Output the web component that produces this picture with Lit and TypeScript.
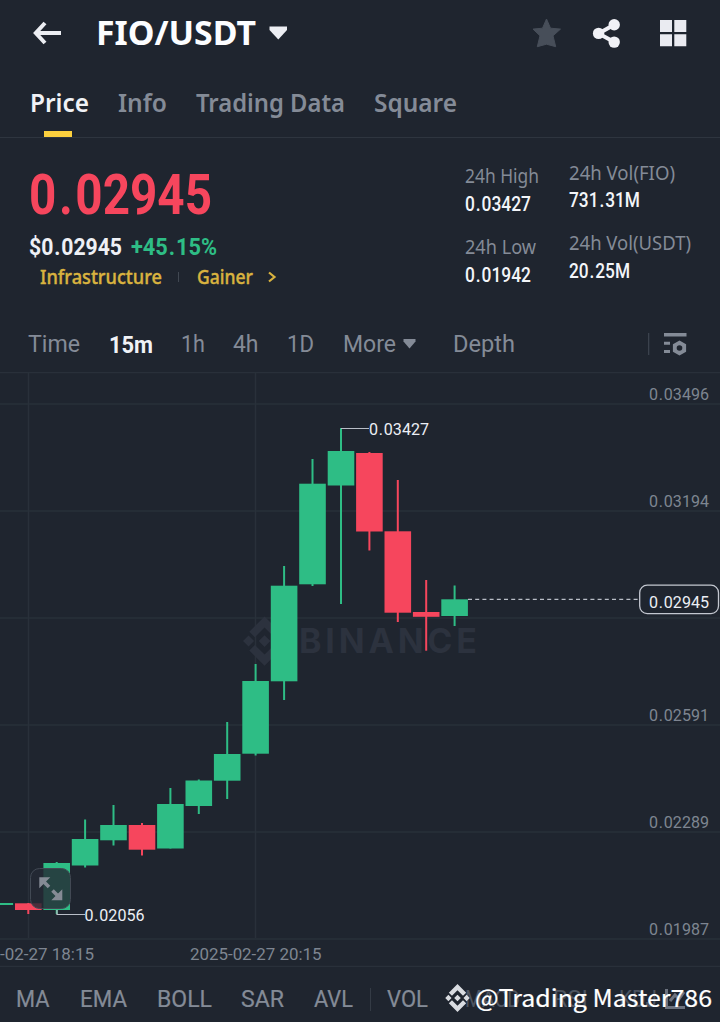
import { LitElement, html, svg, css, nothing } from "lit";
import { customElement } from "lit/decorators.js";

/** A one-line label whose box is its cap height, set to a fixed measure. `dot` opens up the decimal point. */
const label = (text: string, width: number, size: number, cls: string, dot = 0) => {
  const cap = Math.round(size * 0.714);
  const at = text.indexOf(".");
  const dx = dot && at > 0 ? [...text].map((_, i) => (i === at || i === at + 1 ? dot : 0)).join(" ") : nothing;
  return html`<svg class="label ${cls}" width=${width} height=${cap}>
    <text x="0" y=${cap} dx=${dx} font-size=${size} textLength=${width} lengthAdjust="spacingAndGlyphs">${text}</text>
  </svg>`;
};

const logoPath =
  "M7.7 11.5 14 5.2l6.3 6.3 3.6-3.6L14 -2 4.1 7.9zM0 14l3.6-3.6L7.2 14l-3.6 3.6zM7.7 16.5 14 22.8l6.3-6.3 3.6 3.6L14 30 4.1 20.1zM20.8 14l3.6-3.6L28 14l-3.6 3.6zM10.2 14 14 10.2 17.8 14 14 17.8z";

@customElement("market-header")
class MarketHeader extends LitElement {
  static styles = css`
    :host { display: block; height: 138px; box-sizing: border-box; border-bottom: 1px solid #2e353f; }
    svg { display: block; overflow: visible; }
    .label { font-family: "Noto Sans", sans-serif; font-weight: 600; fill: #848b97; }
    .title { font-weight: 700; fill: #fcfdff; }
    .active { fill: #f0f2f6; }
    .top { height: 66px; display: grid; align-items: center; grid-template-columns: 63px 173px 264px 60px 67px 26px; padding-left: 33px; }
    .tabs { display: grid; grid-template-columns: 88px 78px 178px 90px; padding: 28px 0 0 29.5px; height: 37px; }
    .mark { width: 28px; height: 6px; margin-left: 44px; background: #fcd03e; }
  `;
  render() {
    return html`
      <div class="top">
        <svg width="29" height="24" fill="none" stroke="#eceef3" stroke-width="4"><path d="M28 12H3M12 2 2.8 12 12 22" /></svg>
        ${label("FIO/USDT", 160, 34, "title")}
        <svg width="19" height="14" fill="#eceef3"><path d="M.5 .5h17.5v3.5L9.3 13.5.5 4z" /></svg>
        <svg width="28" height="28" fill="#474e59"><path d="m13.5 0 4 9.2 10 .9-7.5 6.7 2.7 10.9-9.2-2.5-9.2 2.5L7 16.8 0 10.1l9.5-.9z" stroke="#474e59" stroke-linejoin="round" /></svg>
        <svg width="28" height="29" fill="#f0f1f6"><circle cx="5.6" cy="14.4" r="5.7" /><circle cx="21.2" cy="5.7" r="5.7" /><circle cx="21.2" cy="23.1" r="5.7" /><path d="m21.2 5.7-15.6 8.7 15.6 8.7" fill="none" stroke="#f0f1f6" stroke-width="4" /></svg>
        <svg width="26" height="26" fill="#eaebf1"><path d="M0 0h12v12H0zM14.3 0h12v12h-12zM0 14.3h12v12H0zM14.3 14.3h12v12h-12z" /></svg>
      </div>
      <div class="tabs">
        ${label("Price", 59, 25, "active")} ${label("Info", 49, 25, "")}
        ${label("Trading Data", 149, 25, "")} ${label("Square", 83, 25, "")}
      </div>
      <div class="mark"></div>
    `;
  }
}

@customElement("market-summary")
class MarketSummary extends LitElement {
  static styles = css`
    :host { display: grid; grid-template-columns: 465px 104px 1fr; height: 178px; }
    svg { display: block; overflow: visible; }
    .label { font-family: Roboto, sans-serif; font-weight: 500; }
    .price { font-weight: 700; fill: #f6465d; }
    .quote { font-weight: 700; fill: #eef0f5; }
    .change { font-weight: 700; fill: #2ebd85; }
    .tag { font-family: "Noto Sans", sans-serif; fill: #d9b33f; stroke: #d9b33f; stroke-width: 0.4; }
    .name { font-weight: 400; font-family: "Noto Sans", sans-serif; fill: #848b97; }
    .value { fill: #f3f5f9; }
    .main { padding: 37px 0 0 29px; }
    .quotes { display: flex; gap: 9px; margin-top: 24px; }
    .tags { display: grid; grid-template-columns: 138px 19px 71px 10px; align-items: center; padding-left: 11px; margin-top: 15px; }
    .stats { display: flex; flex-direction: column; gap: 14px; padding-top: 31px; }
    .stats .name:nth-child(3) { margin-top: 15px; }
    .volume { padding-top: 28px; }
    .volume .label:nth-child(2) { margin-top: -1px; }
  `;
  render() {
    return html`
      <div class="main">
        ${label("0.02945", 183, 55, "price", 3)}
        <div class="quotes">${label("$0.02945", 93, 23.5, "quote", 1)}${label("+45.15%", 86, 23.5, "change", 1)}</div>
        <div class="tags">
          ${label("Infrastructure", 122, 19.5, "tag")}
          <svg width="2" height="10" fill="#414852"><path d="M0 0h1v10H0z" /></svg>
          ${label("Gainer", 56, 19.5, "tag")}
          <svg width="8" height="11" fill="none" stroke="#d9b33f" stroke-width="2.2"><path d="m1 .5 5.5 4.5L1 9.5" /></svg>
        </div>
      </div>
      <div class="stats">
        ${label("24h High", 74, 19.5, "name")} ${label("0.03427", 66, 19.5, "value", 1)}
        ${label("24h Low", 71, 19.5, "name")} ${label("0.01942", 66, 19.5, "value", 1)}
      </div>
      <div class="stats volume">
        ${label("24h Vol(FIO)", 106, 19.5, "name")} ${label("731.31M", 71, 19.5, "value", 1)}
        ${label("24h Vol(USDT)", 122, 19.5, "name")} ${label("20.25M", 61, 19.5, "value", 1)}
      </div>
    `;
  }
}

@customElement("interval-bar")
class IntervalBar extends LitElement {
  static styles = css`
    :host { display: grid; grid-template-columns: 80.5px 72.5px 52px 54px 55.5px 60px 50px 195.5px 16px 24px; align-items: center; height: 56px; padding-left: 28px; }
    svg { display: block; overflow: visible; }
    .label { font-family: Roboto, sans-serif; font-weight: 400; fill: #848b97; }
    .active { font-weight: 700; fill: #f0f2f6; padding-top: 1px; }
  `;
  render() {
    return html`
      ${label("Time", 52, 23, "")} ${label("15m", 44, 23, "active")} ${label("1h", 24, 23, "")}
      ${label("4h", 25.5, 23, "")} ${label("1D", 27, 23, "")} ${label("More", 53, 23, "")}
      <svg width="13" height="10" fill="#848b97"><path d="M.5 0h12v2.5L6.5 9.5.5 2.5z" /></svg>
      ${label("Depth", 62, 23, "")}
      <svg width="1" height="22" fill="#3b424d"><path d="M0 0h1.3v22H0z" /></svg>
      <svg width="23" height="22" fill="#848b97"><path d="M0 0h22.5v3.4H0zM0 8.7h6v3H0zM0 17h6v3H0zM15.5 7.5l6.6 3.8v7.4l-6.6 3.8-6.6-3.8v-7.4z" /><circle cx="15.5" cy="15" r="2.8" fill="#1f252f" /></svg>
    `;
  }
}

/* x centre, body top, body bottom, wick top, wick bottom, rising */
type Candle = [number, number, number, number, number, boolean];
const candles: Candle[] = [
  [-0.2, 903, 905, 903, 905, true],
  [28.3, 903.3, 910, 903, 914, false],
  [56.7, 863, 910, 862, 914, true],
  [85.1, 839, 865.5, 819.5, 867.5, true],
  [113.5, 825, 840.3, 805, 845.5, true],
  [142, 825, 849.7, 823, 855.5, false],
  [170.4, 804, 848.5, 788, 848.5, true],
  [198.8, 780.5, 806, 779.5, 814, true],
  [227.2, 754, 780.7, 722, 799, true],
  [255.6, 681, 753.7, 664, 755.5, true],
  [284.1, 585.7, 681.3, 566, 700, true],
  [312.5, 483.7, 584.3, 459, 586, true],
  [341, 451, 485.5, 428, 604, true],
  [369.4, 453, 531.5, 452, 550.5, false],
  [397.8, 531.3, 612.7, 480, 622, false],
  [426.2, 612, 616.8, 580, 650.7, false],
  [454.6, 599.3, 616, 585.5, 626, true],
];
const scale: [string, number][] = [
  ["0.03496", 400], ["0.03194", 507], ["0.02591", 721], ["0.02289", 828], ["0.01987", 935],
];
const dot = "0 .8 .8 0 0 0 0";

@customElement("candle-chart")
class CandleChart extends LitElement {
  static styles = css`
    :host { display: block; height: 595px; }
    svg { display: block; }
    text { font-family: Roboto, sans-serif; font-size: 16.5px; }
    .grid { stroke: #29303a; stroke-width: 1.5; }
    .axis { fill: #7e8591; }
    .note { fill: #eceff5; }
    .brand { font-family: Inter, sans-serif; font-weight: 700; font-size: 34px; fill: #2c323e; }
    .mark { fill: #2c323e; }
    .up { fill: #2ebd85; }
    .down { fill: #f6465d; }
    .lead { stroke: #b9bec7; stroke-width: 1.2; fill: none; }
    .last { fill: #1f252f; stroke: #c3c7d0; stroke-width: 1.3; }
    .expand { fill: #242a34; fill-opacity: 0.82; stroke: #424954; stroke-width: 1; }
    .arrows { fill: #858b95; stroke: #858b95; }
  `;
  render() {
    return html`<svg width="720" height="595" viewBox="0 372 720 595">
      <g class="grid">
        ${[372.5, 404, 511, 618, 725, 832, 939, 966.5].map((y) => svg`<path d="M0 ${y}H720" />`)}
        <path d="M28.5 372V938M255.5 372V938" />
      </g>
      <path class="mark" d=${logoPath} transform="translate(243 619.5) scale(1.54)" />
      <text class="brand" x="299" y="652.8" textLength="178" lengthAdjust="spacing">BINANCE</text>
      ${candles.map(([x, top, bottom, high, low, up]) => svg`<g class=${up ? "up" : "down"}>
        <rect x=${x - 1} y=${high} width="2" height=${low - high} />
        <rect x=${x - 13.3} y=${top} width="26.6" height=${bottom - top} /></g>`)}
      <path class="lead" d="M341 428.5H369M57 910V914.5H85" />
      <path class="lead" d="M468 599.3H640" stroke-dasharray="4 3.2" />
      <text class="note" x="369" y="435" dx=${dot} textLength="60" lengthAdjust="spacingAndGlyphs">0.03427</text>
      <text class="note" x="84.5" y="921" dx=${dot} textLength="60" lengthAdjust="spacingAndGlyphs">0.02056</text>
      ${scale.map(([t, y]) => svg`<text class="axis" x="649" y=${y} dx=${dot} textLength="60" lengthAdjust="spacingAndGlyphs">${t}</text>`)}
      <rect class="last" x="639.7" y="585.2" width="78.8" height="28.4" rx="7.5" />
      <text class="note" x="649" y="608" dx=${dot} textLength="60" lengthAdjust="spacingAndGlyphs">0.02945</text>
      <text class="axis" x="0" y="960" textLength="94" lengthAdjust="spacingAndGlyphs">-02-27 18:15</text>
      <text class="axis" x="190" y="960" textLength="131.5" lengthAdjust="spacingAndGlyphs">2025-02-27 20:15</text>
      <rect class="expand" x="30.5" y="868.5" width="40" height="40" rx="9" />
      <g class="arrows">
        <path stroke="none" d="M39.3 877.3h11l-11 11zM62.3 900.3h-11l11-11z" />
        <path stroke-width="3.6" d="m42 880 7 7M59.5 897.5l-7-7" />
      </g>
    </svg>`;
  }
}

@customElement("indicator-bar")
class IndicatorBar extends LitElement {
  static styles = css`
    :host { display: block; position: relative; height: 55px; }
    svg { display: block; overflow: visible; }
    .label { font-family: Roboto, sans-serif; fill: #848b97; stroke: #848b97; stroke-width: 0.2; }
    .row { display: grid; align-items: center; grid-template-columns: 64px 77px 84.5px 72.5px 56px 17px 78px 88px 66px 46px 20px; padding: 8px 0 0 15.5px; height: 48px; }
    .dim { fill: #4d5460; stroke: none; }
    .credit { position: absolute; left: 444px; top: 17px; display: grid; grid-template-columns: 31px 237px; align-items: center; }
    .sign { font-family: "Noto Sans CJK SC", sans-serif; fill: #ffffff; stroke: #ffffff; }
  `;
  render() {
    return html`
      <div class="row">
        ${label("MA", 33.5, 23, "")} ${label("EMA", 47, 23, "")} ${label("BOLL", 55, 23, "")}
        ${label("SAR", 43, 23, "")} ${label("AVL", 39, 23, "")}
        <svg width="1" height="23" fill="#343b45"><path d="M0 0h1v23H0z" /></svg>
        ${label("VOL", 41, 23, "")} ${label("MACD", 55, 23, "dim")} ${label("RSI", 35, 23, "dim")}
        ${label("KDJ", 38, 23, "dim")}
        <svg width="20" height="20" fill="none" stroke="#6b727e" stroke-width="3"><path d="M1.5 0v18.5H20M5 12l5-6 4 4 5-7" /></svg>
      </div>
      <div class="credit">
        <svg width="27" height="28" viewBox="0 -2 28 32" fill="#d9dce1"><path d=${logoPath} /></svg>
        ${label("@Trading Master786", 237, 24, "sign")}
      </div>
    `;
  }
}

@customElement("app-root")
class AppRoot extends LitElement {
  static styles = css`
    :host { display: block; width: 720px; height: 1022px; overflow: hidden; background: #1f252f; }
  `;
  render() {
    return html`<market-header></market-header><market-summary></market-summary><interval-bar></interval-bar><candle-chart></candle-chart><indicator-bar></indicator-bar>`;
  }
}
